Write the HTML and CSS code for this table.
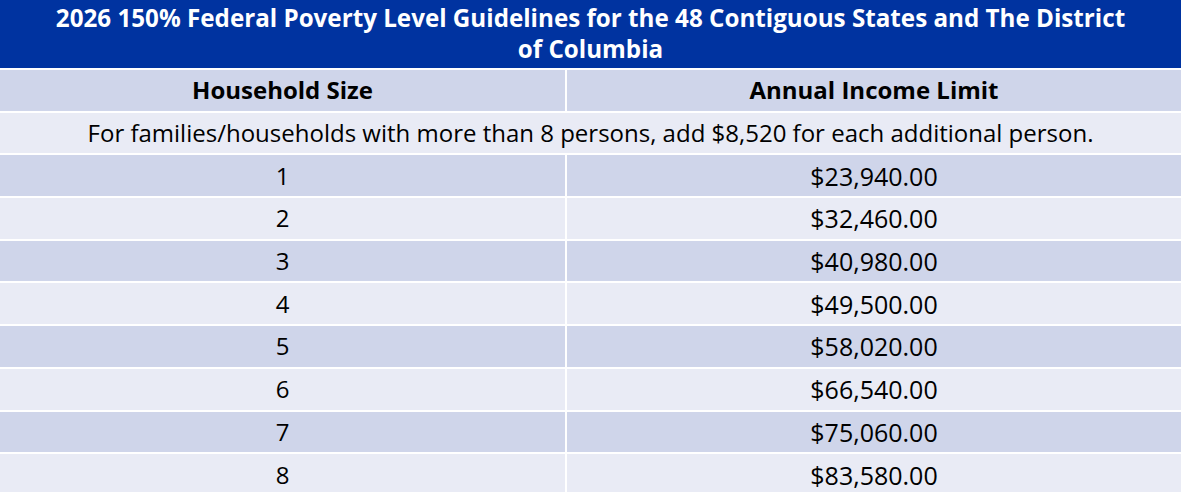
FILE: index.html
```html
<!DOCTYPE html>
<html lang="en">
<head>
<meta charset="utf-8">
<title>2026 150% Federal Poverty Level Guidelines</title>
<link rel="stylesheet" href="styles.css">
</head>
<body>
<table class="fpl">
  <colgroup>
    <col class="col-size">
    <col class="col-limit">
  </colgroup>
  <thead>
    <tr class="title-row">
      <th colspan="2" class="title">2026 150% Federal Poverty Level Guidelines for the 48 Contiguous States and The District of Columbia</th>
    </tr>
    <tr class="head-row">
      <th>Household Size</th>
      <th class="sep">Annual Income Limit</th>
    </tr>
  </thead>
  <tbody>
    <tr class="light">
      <td colspan="2" class="note">For families/households with more than 8 persons, add $8,520 for each additional person.</td>
    </tr>
    <tr class="dark"><td>1</td><td class="sep money">$23,940.00</td></tr>
    <tr class="light"><td>2</td><td class="sep money">$32,460.00</td></tr>
    <tr class="dark"><td>3</td><td class="sep money">$40,980.00</td></tr>
    <tr class="light"><td>4</td><td class="sep money">$49,500.00</td></tr>
    <tr class="dark"><td>5</td><td class="sep money">$58,020.00</td></tr>
    <tr class="light"><td>6</td><td class="sep money">$66,540.00</td></tr>
    <tr class="dark"><td>7</td><td class="sep money">$75,060.00</td></tr>
    <tr class="light"><td>8</td><td class="sep money">$83,580.00</td></tr>
  </tbody>
</table>
</body>
</html>
```

FILE: styles.css
```css
html, body {
  margin: 0;
  padding: 0;
  background: #ffffff;
}

body {
  font-family: "Open Sans", "Noto Sans", "Liberation Sans", sans-serif;
  color: #000000;
}

.fpl {
  width: 1181px;
  table-layout: fixed;
  border-collapse: separate;
  border-spacing: 0;
}

.col-size { width: 565px; }
.col-limit { width: 616px; }

.fpl th,
.fpl td {
  padding: 0;
  text-align: center;
  vertical-align: middle;
  border-top: 2px solid #ffffff;
  height: 40.7px;
  line-height: 30px;
  font-size: 24px;
}

.fpl th { font-weight: 700; }

.fpl .money { font-size: 25px; }

.fpl .sep { border-left: 2px solid #ffffff; }

.title-row .title {
  border-top: 0;
  background: #0033a0;
  color: #ffffff;
  height: 68px;
  line-height: 31px;
  font-size: 24.2px;
  padding: 2px 50px 4px;
  box-sizing: border-box;
}

.head-row th { background: #cfd5ea; }

.dark td { background: #cfd5ea; }
.light td { background: #e9ebf5; }
```
